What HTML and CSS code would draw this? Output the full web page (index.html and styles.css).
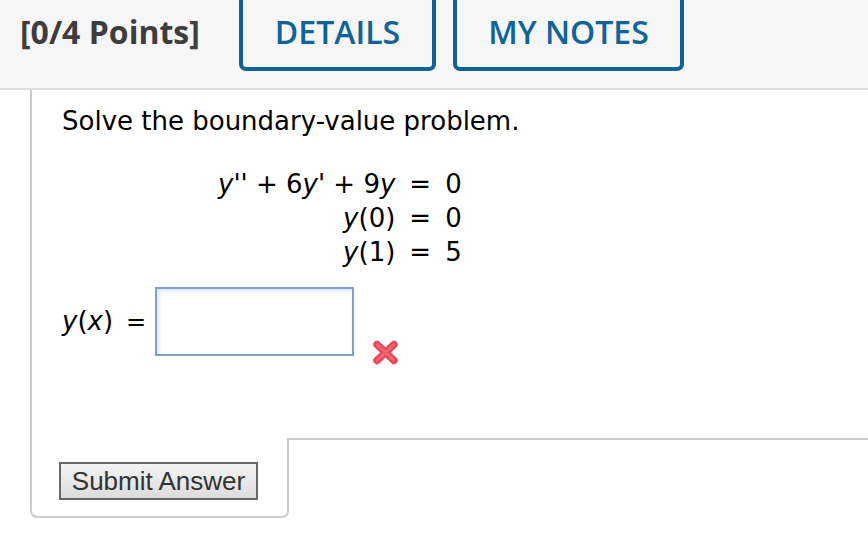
FILE: index.html
```html
<!DOCTYPE html>
<html>
<head>
<meta charset="utf-8">
<link rel="stylesheet" href="styles.css">
</head>
<body>
<header class="qhead">
  <div class="points">[0/4 Points]</div>
  <div class="tabs">
    <a class="tabbtn details">DETAILS</a>
    <a class="tabbtn notes">MY NOTES</a>
  </div>
</header>
<main class="panel">
  <section class="question">
    <p class="prompt">Solve the boundary-value problem.</p>
    <div class="eqs">
      <span class="lhs"><i>y''</i> + 6<i>y'</i> + 9<i>y</i></span><span class="eq">=</span><span class="rhs">0</span>
      <span class="lhs"><i>y</i>(0)</span><span class="eq">=</span><span class="rhs">0</span>
      <span class="lhs"><i>y</i>(1)</span><span class="eq">=</span><span class="rhs">5</span>
    </div>
    <div class="answer">
      <span class="alabel"><span><i>y</i>(<i>x</i>)</span><span class="aeq">=</span></span>
      <span class="inputbox"></span>
      <svg class="wrong" width="29" height="27" viewBox="0 0 29 27">
        <path d="M6 5.5 L23 21.5 M23 5.5 L6 21.5" stroke="#ea4a57" stroke-width="7.5" stroke-linecap="round" fill="none"/>
        <path d="M6 5.5 L23 21.5 M23 5.5 L6 21.5" stroke="#f4737d" stroke-width="2.5" stroke-linecap="round" fill="none" opacity="0.7"/>
      </svg>
    </div>
  </section>
  <div class="footer">
    <div class="submittab"><button class="submit">Submit Answer</button></div>
    <div class="rest"></div>
  </div>
</main>
</body>
</html>
```
FILE: styles.css
```css
html, body { margin: 0; padding: 0; background: #fff; }
body { font-family: "DejaVu Sans", Verdana, sans-serif; color: #000; }

.qhead {
  background: #f6f6f6;
  height: 88px;
  border-bottom: 2px solid #dddddd;
  display: flex;
  align-items: flex-start;
  padding-left: 20px;
}
.points {
  width: 219px;
  font-family: "Open Sans", sans-serif;
  font-weight: 700;
  font-size: 32px;
  color: #3d3d3d;
  line-height: 30px;
  padding-top: 17px;
}
.tabs { display: flex; gap: 17px; }
.tabbtn {
  box-sizing: border-box;
  height: 71px;
  border: 4px solid #0f6396;
  border-top: none;
  border-radius: 0 0 7px 7px;
  font-family: "Open Sans", sans-serif;
  font-weight: 600;
  font-size: 32px;
  color: #0f6396;
  display: flex;
  justify-content: center;
  line-height: 30px;
  padding-top: 17px;
}
.details { width: 197px; }
.notes { width: 231px; }

.panel { margin-left: 30px; }
.question {
  border-left: 2px solid #cccccc;
  height: 348px;
  padding-left: 30px;
  box-sizing: border-box;
  padding-top: 16px;
}
.prompt {
  margin: 0;
  font-size: 26px;
  line-height: 30px;
}
.eqs {
  display: grid;
  grid-template-columns: auto auto auto;
  justify-content: start;
  column-gap: 14px;
  margin-left: 156px;
  margin-top: 31px;
  font-size: 26px;
  line-height: 34px;
}
.lhs { text-align: right; }
.eqs i, .alabel i { font-style: italic; }

.answer {
  display: flex;
  align-items: center;
  margin-top: 18px;
  font-size: 26px;
}
.alabel { width: 93px; line-height: 30px; display: flex; align-items: baseline; }
.aeq { margin-left: 13px; font-size: 24px; }
.inputbox {
  box-sizing: border-box;
  width: 199px;
  height: 69px;
  border: 2px solid #7da1c9;
  box-shadow: inset 2px 2px 4px #d6e6f6;
  background: #fff;
}
.wrong { align-self: flex-end; margin-left: 17px; margin-bottom: -10px; }

.footer { display: flex; }
.submittab {
  width: 259px;
  box-sizing: border-box;
  border: 2px solid #cccccc;
  border-top: none;
  border-radius: 0 0 7px 7px;
  padding: 24px 0 16px 27px;
}
.rest { flex: 1; border-top: 2px solid #cccccc; }
.submit {
  box-sizing: border-box;
  width: 199px;
  height: 38px;
  border: 2px solid #686868;
  background: linear-gradient(#f4f4f4, #dcdcdc);
  font-family: "Liberation Sans", Arial, sans-serif;
  font-size: 26px;
  color: #333;
  padding: 0;
  display: block;
}
```
